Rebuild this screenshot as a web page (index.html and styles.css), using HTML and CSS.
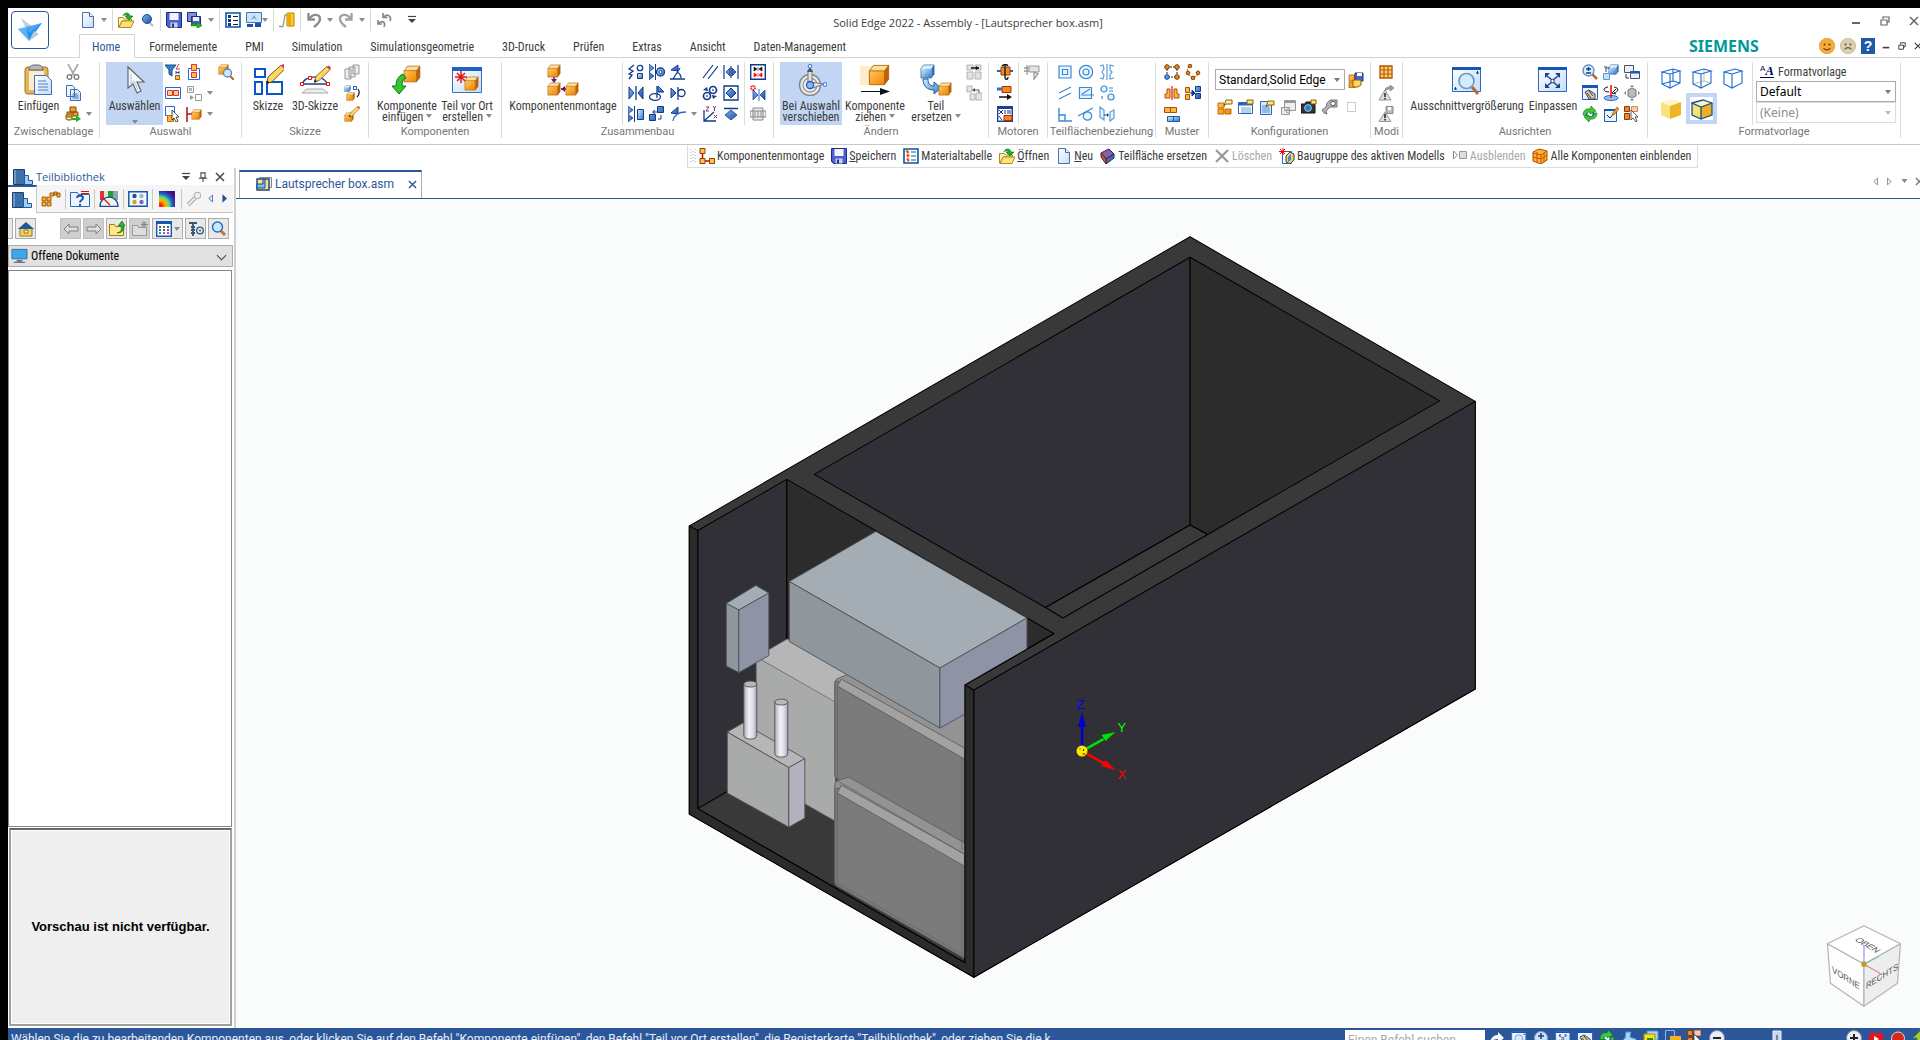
FILE: index.html
```html
<!DOCTYPE html>
<html lang="de">
<head>
<meta charset="utf-8">
<title>Solid Edge 2022 - Assembly</title>
<link rel="stylesheet" href="styles.css">
</head>
<body>
<svg class="defs" aria-hidden="true">
<defs>
<linearGradient id="or" x1="0" y1="0" x2="1" y2="1"><stop offset="0" stop-color="#ffc85a"/><stop offset="1" stop-color="#f08400"/></linearGradient>
<linearGradient id="bl" x1="0" y1="0" x2="1" y2="1"><stop offset="0" stop-color="#d8f0ff"/><stop offset="1" stop-color="#2a7ac8"/></linearGradient>
<linearGradient id="dk" x1="0" y1="0" x2="1" y2="1"><stop offset="0" stop-color="#7fb0e8"/><stop offset="1" stop-color="#1b4fa8"/></linearGradient>
<linearGradient id="pg" x1="0" y1="0" x2="1" y2="1"><stop offset="0" stop-color="#fff"/><stop offset="1" stop-color="#c4dcf8"/></linearGradient>
<linearGradient id="cyl"><stop offset="0" stop-color="#aeabb6"/><stop offset=".4" stop-color="#f2f0fa"/><stop offset=".7" stop-color="#dedce8"/><stop offset="1" stop-color="#a4a2ac"/></linearGradient>
<radialGradient id="heat" cx="0.1" cy="0.9" r="1.1"><stop offset="0" stop-color="#f00"/><stop offset=".3" stop-color="#fb0"/><stop offset=".5" stop-color="#4d8"/><stop offset=".65" stop-color="#26c"/><stop offset=".9" stop-color="#40108a"/></radialGradient>
</defs>
<symbol id="caret" viewBox="0 0 6 4"><path d="M0 0h6L3 4z" fill="#8a8a8a"/></symbol>
<symbol id="cb" viewBox="0 0 16 16"><path d="M1 5l3-4h11l-3 4z" fill="#ffdf95"/><path d="M15 1v10l-3 4V5z" fill="#c55f00"/><path d="M1 5h11v10H1z" fill="url(#or)"/><path d="M1 5l3-4h11v10l-3 4H1zM1 5h11l3-4M12 5v10" fill="none" stroke="#a05a10" stroke-width=".6"/></symbol>
<symbol id="cbb" viewBox="0 0 16 16"><path d="M1 5l3-4h11l-3 4z" fill="#d9f0ff"/><path d="M15 1v10l-3 4V5z" fill="#2a72b8"/><path d="M1 5h11v10H1z" fill="url(#bl)"/><path d="M1 5l3-4h11v10l-3 4H1z" fill="none" stroke="#2a5f98" stroke-width=".7"/></symbol>
<symbol id="new" viewBox="0 0 16 16"><path d="M2.500.500h7l4 4v11h-11z" fill="url(#pg)" stroke="#4a6ea8"/><path d="M9.500.500v4h4" fill="#fff" stroke="#4a6ea8"/></symbol>
<symbol id="open" viewBox="0 0 16 16"><path d="M.5 5.500h5l1 1.500h7v2H4L1 15H.500z" fill="#fff3b8" stroke="#b08a20"/><path d="M1 15.500L4 9h12l-3 6.500z" fill="#ffe07c" stroke="#b08a20"/><path d="M5 3.500C7 0 11 0 12 4h3l-4 4-4-4h2.500C9 2.500 7 2.500 5 3.500z" fill="#19b219" stroke="#08690c" stroke-width=".6"/></symbol>
<symbol id="ball" viewBox="0 0 16 16"><path d="M9 9l5 5" stroke="#bbb" stroke-width="2"/><circle cx="8" cy="7" r="4.500" fill="url(#dk)" stroke="#1e4f96"/></symbol>
<symbol id="save" viewBox="0 0 16 16"><path d="M.5.500h15v15h-13l-2-2z" fill="#4a5fd0" stroke="#1c2c80"/><path d="M3.500 1h9v7h-9z" fill="#f0f4fb"/><path d="M4.500 10.500h7v5h-7z" fill="#c9d2e6"/><path d="M6 11.500h2v4H6z" fill="#23328c"/></symbol>
<symbol id="saveas" viewBox="0 0 16 16"><path d="M.5.500h9v9h-9z" fill="#7f8ee0" stroke="#1c2c80"/><path d="M4.500 4.500h9v9h-9z" fill="#4a5fd0" stroke="#1c2c80"/><path d="M6 5h6v4H6z" fill="#eef"/><path d="M5 9v3h5v-2.500l5 4-5 3V14H4z" fill="#1cb81c" stroke="#07690a" stroke-width=".5"/></symbol>
<symbol id="list" viewBox="0 0 16 16"><path d="M1 1h14v14H1z" fill="#fff" stroke="#0a56a0" stroke-width="1.600"/><path d="M3 3h3v3H3zM3 7h3v3H3zM3 11h3v3H3z" fill="#0a3c80"/><path d="M8 4.500h5M8 8.500h5M8 12.500h5" stroke="#222"/></symbol>
<symbol id="mat" viewBox="0 0 16 16"><path d="M1 1h14v14H1z" fill="#fff" stroke="#0a56a0" stroke-width="1.600"/><path d="M2.500 3l2-1 2 2-2 2zM3 7l2-1 2 1-2 3zM3 11l2-1 2 2-2 2z" fill="#e8590c"/><path d="M8 4h5M8 8h5M8 12h5" stroke="#135b9a" stroke-width="1.200"/></symbol>
<symbol id="disp" viewBox="0 0 16 16"><path d="M.5.500h15v10H.5z" fill="#cfe2f7" stroke="#3f74b8"/><path d="M5 8l3-5 3 5-3-2z" fill="#6aa0dc"/><path d="M1 12h6v3H1zM9 11h6v4H9z" fill="#1d51a8"/></symbol>
<symbol id="door" viewBox="0 0 16 16"><path d="M8 1h7v13H8z" fill="#ffc928" stroke="#b98100"/><path d="M8 1l4 2v12.500l-4-2z" fill="#e8ac00"/><path d="M0 14.500h4L6 3h2" fill="none" stroke="#999" stroke-width="1.300"/></symbol>
<symbol id="undo" viewBox="0 0 16 16"><path d="M2.500 1v6.500h6.500M3 7C7 1 14 2 14 7c0 3-2 5-6 8" fill="none" stroke="#8c8c8c" stroke-width="2.400"/></symbol>
<symbol id="redo" viewBox="0 0 16 16"><path d="M13.500 1v6.500H7M13 7C9 1 2 2 2 7c0 3 2 5 6 8" fill="none" stroke="#a2a2a2" stroke-width="2.400"/></symbol>
<symbol id="hist" viewBox="0 0 16 16"><path d="M7 1v4.500h4.500M8 5c3-4 8-1 6 4M2 8v4h4M3 11c3-3 7-1 5 4" fill="none" stroke="#888" stroke-width="1.700"/></symbol>
<symbol id="cust" viewBox="0 0 10 10"><path d="M1 1.500h8" stroke="#444" stroke-width="1.200"/><path d="M1 4h8L5 8z" fill="#444"/></symbol>
<symbol id="logo" viewBox="0 0 36 36"><path d="M9 6l12 9-5 6z" fill="#c3cdd8"/><path d="M6 17l10-3 2 14z" fill="#7fc2f6"/><path d="M30 11L17 29l-3-12z" fill="#2b8ff0"/><path d="M30 11l-16 4 3 6z" fill="#4ba6f7"/><path d="M17 29l5-10 5 3z" fill="#b9c8da"/><path d="M6 17l8-1 3 13z" fill="#5db2f4"/></symbol>
<symbol id="paste" viewBox="0 0 32 32"><rect x="2" y="3" width="23" height="27" rx="3" fill="#e6b558" stroke="#a07020"/><path d="M6 7h15v19H6z" fill="#f9eed2"/><path d="M6 6c0-4 3-5 5-5h4c3 0 5 2 5 5z" fill="#b8b8b8" stroke="#666"/><path d="M11.500 11.500h12l5 5v14h-17z" fill="url(#pg)" stroke="#3f6fb8"/><path d="M15 17h8M15 20h10M15 23h10M15 26h10" stroke="#4d82c8"/></symbol>
<symbol id="cut" viewBox="0 0 16 16"><path d="M3 0l6 11M13 0L7 11" stroke="#aaa" stroke-width="1.700"/><circle cx="4.500" cy="13" r="2.300" fill="none" stroke="#777" stroke-width="1.300"/><circle cx="11.500" cy="13" r="2.300" fill="none" stroke="#777" stroke-width="1.300"/></symbol>
<symbol id="copy" viewBox="0 0 16 16"><path d="M1.500.500h6l2 2v9h-8zM5.500 4.500h7l3 3v8h-10z" fill="url(#pg)" stroke="#3b6fba"/><path d="M7.500 9h5M7.500 11h6M7.500 13h6" stroke="#3b6fba"/></symbol>
<symbol id="clone" viewBox="0 0 16 16"><path d="M5 1h6v5H5zM2 6h5v5H2zM8 6h5v4H8z" fill="#eaa030" stroke="#8a4a00"/><circle cx="4" cy="11" r="3" fill="none" stroke="#a08020" stroke-width="1.500"/><path d="M7 12h4V9l5 4-5 3v-2H7z" fill="#20b420"/></symbol>
<symbol id="cursor" viewBox="0 0 32 32"><path d="M9 3v21l5-4 4 9 4-2-4-9h7z" fill="#f4f8ff" stroke="#666" stroke-width="1.200"/><path d="M12 10v10l3-3 4 9" fill="none" stroke="#a8c6ea"/></symbol>
<symbol id="filter" viewBox="0 0 16 16"><path d="M0 1h11L7 6v6l-3-2V6z" fill="#3a80c8" stroke="#154a88"/><path d="M14 0l-3 5h4" fill="none" stroke="#e33"/><path d="M10.500 11.500h4v4h-4z" fill="#ffbf47" stroke="#a85b00"/><path d="M11 7v3M14 7v3M11 8.500h3" stroke="#24c"/></symbol>
<symbol id="boxsel" viewBox="0 0 16 16"><path d="M.5 2.500h15v11H.5z" fill="#fff" stroke="#2266dd"/><path d="M2.500 5.500h5v5h-5zM8.500 5.500h5v5h-5z" fill="#ffd08a" stroke="#d33"/></symbol>
<symbol id="cursel" viewBox="0 0 16 16"><path d="M.5.500h9v9h-9z" fill="#fff" stroke="#2266dd"/><path d="M2.500 9.500h6v6h-6z" fill="#ffb52e" stroke="#c26c00"/><path d="M7 4v10l2-2 2 4 2-1-2-4h3z" fill="#fff" stroke="#222" stroke-width=".8"/></symbol>
<symbol id="topsel" viewBox="0 0 16 16"><path d="M2.500 4.500h11v11h-11z" fill="#fff" stroke="#2266dd"/><path d="M5.500 .500h5v6h-5zM5.500 8.500h5v5h-5z" fill="#ffbe55" stroke="#d33"/></symbol>
<symbol id="graysel" viewBox="0 0 16 16"><path d="M1.500 1.500h6v6h-6zM9.500 9.500h6v6h-6z" fill="#fff" stroke="#999"/><path d="M3.500 3.500h2v2h-2z" stroke="#999" fill="none"/><path d="M4 10l4 2.500L4 15z" fill="#999"/></symbol>
<symbol id="plane" viewBox="0 0 16 16"><path d="M1 1v15M1 8h5" stroke="#b01010" stroke-width="1.500"/><use href="#cb" x="5" y="3" width="11" height="11"/></symbol>
<symbol id="find" viewBox="0 0 16 16"><use href="#cb" width="11" height="11"/><path d="M12 12l4 4" stroke="#b06a30" stroke-width="2"/><circle cx="9.500" cy="9" r="4" fill="#cfe8fc" stroke="#5a88b8" stroke-width="1.300"/></symbol>
<symbol id="pencil" viewBox="0 0 16 16"><path d="M0 16l2-6L12 1l3 3L5 14z" fill="#ffd566" stroke="#7a5512" stroke-width=".8"/><path d="M12 1l2-1 2 2-1 2z" fill="#e0306c"/><path d="M0 16l1-3 2 2z" fill="#222"/></symbol>
<symbol id="sketch" viewBox="0 0 32 32"><path d="M3 5h10v8H3zM3 18h7v12H3zM15 18h15v12H15z" fill="#fff" stroke="#0a56c8" stroke-width="2"/><use href="#pencil" x="14" y="0" width="20" height="20"/></symbol>
<symbol id="sk3d" viewBox="0 0 32 32"><path d="M8 25h16l5 4H3z" fill="#eee" stroke="#aaa"/><path d="M3 20h26M3 20c2-4 5-6 8-6 6-2 12-2 17 5" fill="none" stroke="#1e3c88" stroke-width="1.300"/><path d="M1.500 18.500h3v3h-3zM27.500 18.500h3v3h-3zM9.500 12.500h3v3h-3z" fill="#fff" stroke="#e01010"/><use href="#pencil" x="15" y="1" width="17" height="18"/></symbol>
<symbol id="gcopy" viewBox="0 0 16 16"><path d="M1 5h6v10H1zM5 3h6v10H5zM9 1h6v9H9z" fill="#eee" stroke="#999"/></symbol>
<symbol id="swap" viewBox="0 0 16 16"><use href="#cbb" width="7" height="7"/><use href="#cb" x="2" y="7" width="9" height="9"/><path d="M9.500 1.500h3v3h-3z" fill="#fff" stroke="#15c"/><path d="M14 4c2 3 1 6-1 8" fill="none" stroke="#111" stroke-width="1.200"/></symbol>
<symbol id="paint" viewBox="0 0 16 16"><use href="#cb" y="6" width="10" height="10"/><use href="#pencil" x="5" y="0" width="11" height="11"/></symbol>
<symbol id="insert" viewBox="0 0 32 32"><use href="#cb" x="12" y="1" width="18" height="18"/><path d="M12 10C7 12 5 17 5 22H1l7 8 7-8h-4c0-4 1-7 4-8z" fill="#35c435" stroke="#0d7a12"/></symbol>
<symbol id="inplace" viewBox="0 0 32 32"><path d="M1.500 3.500h29v25h-29z" fill="url(#pg)" stroke="#3b6fba"/><path d="M1 3h30v4H1z" fill="#1d62c4"/><use href="#cb" x="13" y="12" width="15" height="15"/><path d="M10 7v12M4 13h12M6 9l8 8M14 9l-8 8" stroke="#e01818" stroke-width="1.500"/></symbol>
<symbol id="assem" viewBox="0 0 32 32"><use href="#cb" x="0" y="0" width="14" height="14"/><use href="#cb" x="0" y="18" width="14" height="14"/><use href="#cb" x="18" y="18" width="14" height="14"/><path d="M7 13v4M14 25h5" stroke="#701070" stroke-width="1.500"/><path d="M4 15h6l-3 4zM18 22v6l-4-3z" fill="#701070"/></symbol>
<symbol id="assems" viewBox="0 0 16 16"><path d="M1 .500h5v5H1zM1 10.500h5v5H1zM10.500 10.500h5v5h-5z" fill="#ffc050" stroke="#8a4400"/><path d="M3.500 6v4M6 13h4" stroke="#c00" stroke-width="1.500"/></symbol>
<symbol id="r1" viewBox="0 0 16 16"><path d="M6 1L1 5l4 2-4 3 3 1-3 4" fill="none" stroke="#123a8c" stroke-width="1.300"/><circle cx="12" cy="4" r="2.700" fill="#fff" stroke="#123a8c" stroke-width="1.300"/><path d="M9.500 9.500h5v5h-5z" fill="url(#bl)" stroke="#123a8c"/></symbol>
<symbol id="r2" viewBox="0 0 16 16"><path d="M0 0l5 4-5 4 5 4-5 4z" fill="url(#dk)" stroke="#123a8c" stroke-width=".7"/><path d="M6.500 0v16" stroke="#123a8c"/><circle cx="11.500" cy="8" r="4" fill="url(#bl)" stroke="#123a8c" stroke-width="1.300"/><circle cx="11.500" cy="8" r="1.600" fill="#fff" stroke="#123a8c"/></symbol>
<symbol id="r3" viewBox="0 0 16 16"><path d="M1 6l7-5v6z" fill="url(#dk)" stroke="#123a8c"/><path d="M3 15L10 4M0 15h15M11 14c0-4-2-5-4-6" fill="none" stroke="#123a8c" stroke-width="1.300"/></symbol>
<symbol id="r4" viewBox="0 0 16 16"><path d="M1 2l5 6-5 6zM15 2l-5 6 5 6z" fill="url(#dk)" stroke="#123a8c"/><path d="M8 1v14" stroke="#123a8c" stroke-width="1.300"/></symbol>
<symbol id="r5" viewBox="0 0 16 16"><path d="M8 1v12" stroke="#123a8c" stroke-width="1.300"/><path d="M9 1l6 6H9z" fill="url(#dk)" stroke="#123a8c"/><ellipse cx="6" cy="12" rx="5.500" ry="3.300" fill="none" stroke="#123a8c" stroke-width="1.300"/></symbol>
<symbol id="r6" viewBox="0 0 16 16"><path d="M1 3l5 5-5 5z" fill="url(#dk)" stroke="#123a8c"/><path d="M8 2v13" stroke="#123a8c" stroke-width="1.300"/><circle cx="11.500" cy="8" r="3.500" fill="#fff" stroke="#123a8c" stroke-width="1.300"/></symbol>
<symbol id="r7" viewBox="0 0 16 16"><path d="M0 0l5 4-5 4 5 4-5 4z" fill="url(#dk)" stroke="#123a8c" stroke-width=".7"/><path d="M6.500 0v16" stroke="#123a8c"/><path d="M9.500 3.500h6v10h-6z" fill="url(#bl)" stroke="#123a8c"/></symbol>
<symbol id="r8" viewBox="0 0 16 16"><path d="M8.500.500h6v6h-6zM.500 8.500h6v6h-6z" fill="url(#dk)" stroke="#123a8c"/><path d="M4 6h4M6 4L3.500 6 6 8M9 13h3V9" fill="none" stroke="#123a8c"/></symbol>
<symbol id="r9" viewBox="0 0 16 16"><path d="M1 7l7-6v7z" fill="url(#dk)" stroke="#123a8c"/><path d="M3 15c1-6 6-9 13-9" fill="none" stroke="#2c6cc8" stroke-width="1.300"/></symbol>
<symbol id="r10" viewBox="0 0 16 16"><path d="M1 14L11 1M6 15L16 2" stroke="#123a8c" stroke-width="1.200"/></symbol>
<symbol id="r11" viewBox="0 0 16 16"><path d="M1 1v14M15 1v14M8 2v12" stroke="#123a8c" stroke-width="1.200"/><path d="M7 4v8L3 8zM9 4v8l4-4z" fill="url(#dk)" stroke="#123a8c" stroke-width=".8"/></symbol>
<symbol id="r12" viewBox="0 0 16 16"><circle cx="11" cy="5" r="3.500" fill="none" stroke="#123a8c" stroke-width="1.700"/><circle cx="5" cy="11" r="3.500" fill="none" stroke="#123a8c" stroke-width="1.700"/><circle cx="11" cy="5" r="1" fill="#2c6cc8"/><circle cx="5" cy="11" r="1" fill="#2c6cc8"/><path d="M1 5l4-3 1 4zM15 11l-4 3-1-4z" fill="#123a8c"/></symbol>
<symbol id="r13" viewBox="0 0 16 16"><path d="M1 1h14v14H1z" fill="#fff" stroke="#123a8c" stroke-width="1.300"/><path d="M8 3l5 5-5 5-5-5z" fill="url(#dk)" stroke="#123a8c"/></symbol>
<symbol id="r14" viewBox="0 0 16 16"><path d="M2 4v11h12M2 15L12 6" fill="none" stroke="#123a8c" stroke-width="1.300"/><path d="M4 1h3L4 5h3M11 0l1.500 2L14 0M12.500 2v3M12 9l3 3M15 9l-3 3" fill="none" stroke="#803090"/></symbol>
<symbol id="r15" viewBox="0 0 16 16"><path d="M1 2.500h14" stroke="#123a8c" stroke-width="1.500"/><path d="M8 4l6 5-6 5-6-5z" fill="url(#dk)" stroke="#123a8c" stroke-width=".8"/></symbol>
<symbol id="c1" viewBox="0 0 16 16"><path d="M.7.700h14.600v14.600H.7z" fill="#fff" stroke="#123a8c" stroke-width="1.400"/><path d="M4 3l3 2-3 2zM12 3L9 5l3 2zM8 3v4" fill="#111" stroke="#111" stroke-width=".6"/><path d="M4 9l3 2-3 2zM12 9l-3 2 3 2zM8 9v4" fill="red" stroke="red" stroke-width=".6"/></symbol>
<symbol id="c2" viewBox="0 0 16 16"><path d="M3 5l5 5-5 5zM15 5l-5 5 5 5z" fill="url(#dk)" stroke="#123a8c" stroke-width=".7"/><path d="M9 4v12" stroke="#2c6cc8"/><circle cx="3" cy="3" r="2" fill="#fff" stroke="red" stroke-width="1.800" stroke-dasharray="1 .6"/></symbol>
<symbol id="c3" viewBox="0 0 16 16"><path d="M3 2h10v12H3zM0 5h16v6H0z" fill="#ececec" stroke="#888"/><path d="M5 5v6M8 5v6M11 5v6" stroke="#888"/></symbol>
<symbol id="move" viewBox="0 0 32 32"><circle cx="15" cy="21" r="10.500" fill="#e9edf2" stroke="#888" stroke-width="1.500"/><circle cx="15" cy="21" r="7" fill="none" stroke="#999" stroke-width="1.300"/><path d="M13 21V6h4v15M15 18l14 2-14 5z" fill="#dfe3e8" stroke="#777"/><path d="M15 3l3 5h-6z" fill="#555"/><circle cx="15" cy="21" r="3.500" fill="#8fb8e8" stroke="#1e5ec8" stroke-width="1.300"/><circle cx="15" cy="2.300" r="1.800" fill="#fff" stroke="#1e70e0"/><circle cx="30" cy="20.500" r="1.800" fill="#fff" stroke="#1e70e0"/></symbol>
<symbol id="drag" viewBox="0 0 32 32"><path d="M1 2h12v19H1z" fill="#ffe0a8" opacity=".6"/><use href="#cb" x="9" y="0" width="22" height="22"/><path d="M2 27h19v-3l10 3.500L21 31v-3H2z" fill="#111"/></symbol>
<symbol id="repl" viewBox="0 0 32 32"><use href="#cbb" width="15" height="15"/><path d="M3 15c0 7 4 11 11 11v4l7-6-7-6v4c-5 0-6-3-6-7z" fill="url(#bl)" stroke="#1e5a9c"/><use href="#cb" x="18" y="18" width="14" height="14"/></symbol>
<symbol id="g1" viewBox="0 0 16 16"><path d="M1 1h6v5H1zM9 1h6v5H9zM1 8h6v7H1zM9 8h6v7H9z" fill="#e2e2e2" stroke="#b4b4b4"/><path d="M5 4h8" stroke="#111" stroke-width="1.500"/><path d="M10 2l3 2-3 2z" fill="#111"/></symbol>
<symbol id="g2" viewBox="0 0 16 16"><path d="M1 1h5v6H1zM4 9h5v6H4zM10 8h6v7h-6z" fill="#e4e4e4" stroke="#b4b4b4"/><path d="M13 8V5H7" fill="none" stroke="#555"/><path d="M9 3L6 5l3 2z" fill="#555"/></symbol>
<symbol id="m1" viewBox="0 0 16 16"><path d="M4 3h9v8H4z" fill="#ef8a1c" stroke="#a03a10"/><path d="M0 7h4M13 7h3" stroke="#2462b8" stroke-width="2"/><path d="M5 2c2-2 5-2 6 0M8 1v12c0 3 3 3 3 0" fill="none" stroke="#111" stroke-width="1.300"/></symbol>
<symbol id="m2" viewBox="0 0 16 16"><path d="M5 1.500h9v6H5z" fill="#f08a18" stroke="#b02a10"/><path d="M0 4h5" stroke="#2c74c8" stroke-width="3"/><path d="M2 12h10" stroke="#111" stroke-width="1.500"/><path d="M10 9l5 3-5 3z" fill="#111"/></symbol>
<symbol id="m3" viewBox="0 0 16 16"><path d="M.7.700h14.600v14.600H.7z" fill="#fff" stroke="#1c3f94" stroke-width="1.400"/><path d="M1 1h14v2H1z" fill="#1c3f94"/><path d="M2 4l4 4M6 4L2 8M8 4v4M10 5h4M10 7h4M2 10l3 4" stroke="#12348c"/><path d="M7 9.500h8v5H7z" fill="#f08a18" stroke="#b02a10"/></symbol>
<symbol id="m4" viewBox="0 0 16 16"><path d="M5 2h10v6H5z" fill="#e4e4e4" stroke="#999"/><path d="M0 4h5M0 7h5M3 1v10M10 8v7l4-5z" fill="#eee" stroke="#999" stroke-width="1.300"/></symbol>
<symbol id="f1" viewBox="0 0 16 16"><path d="M2 2h12v12H2zM5.500 5.500h5v5h-5z" fill="#eaf4fd" stroke="#3b8ad4" stroke-width="1.200"/></symbol>
<symbol id="f2" viewBox="0 0 16 16"><circle cx="8" cy="8" r="6.700" fill="#eaf4fd" stroke="#3b8ad4" stroke-width="1.200"/><circle cx="8" cy="8" r="3" fill="none" stroke="#3b8ad4" stroke-width="1.200"/></symbol>
<symbol id="f3" viewBox="0 0 16 16"><path d="M1 2l3-1 1 4-2 3 2 3-1 4-3-1M15 2l-4-1v5l2 2-2 3v4l4-1M8 0v16" fill="none" stroke="#5a9cd8" stroke-width="1.200"/></symbol>
<symbol id="f4" viewBox="0 0 16 16"><path d="M2 8l12-6M2 14l12-6" stroke="#3b8ad4" stroke-width="1.200"/></symbol>
<symbol id="f5" viewBox="0 0 16 16"><path d="M1.500 2.500h12v11h-12z" fill="#eaf4fd" stroke="#3b8ad4" stroke-width="1.200"/><path d="M3 10h13M4 9l8-5" stroke="#3b8ad4" stroke-width="1.200"/></symbol>
<symbol id="f6" viewBox="0 0 16 16"><circle cx="5" cy="4" r="3" fill="#eaf4fd" stroke="#3b8ad4" stroke-width="1.200"/><circle cx="12" cy="12" r="3" fill="#eaf4fd" stroke="#3b8ad4" stroke-width="1.200"/><path d="M10 3h4M10 6h4M3 11v3" stroke="#3b8ad4" stroke-width="1.200"/></symbol>
<symbol id="f7" viewBox="0 0 16 16"><path d="M2 2v13h13M2 9h6v6" fill="none" stroke="#3b8ad4" stroke-width="1.400"/></symbol>
<symbol id="f8" viewBox="0 0 16 16"><circle cx="9.500" cy="10" r="4.200" fill="#eaf4fd" stroke="#3b8ad4" stroke-width="1.200"/><path d="M0 10l15-8" stroke="#3b8ad4" stroke-width="1.200"/></symbol>
<symbol id="f9" viewBox="0 0 16 16"><path d="M1 1l4 3v10l-4-3zM15 4l-4 2v9l4-3z" fill="#eaf4fd" stroke="#5a9cd8" stroke-width="1.200"/><path d="M5 9h4" stroke="#123a8c"/><path d="M8 7l2 2-2 2z" fill="#123a8c"/></symbol>
<symbol id="p1" viewBox="0 0 16 16"><path d="M3 3h10v10H3z" fill="none" stroke="#222" stroke-dasharray="2 1"/><circle cx="3" cy="3" r="2.300" fill="#e88a20" stroke="#7a3400"/><circle cx="13" cy="3" r="2.300" fill="#e88a20" stroke="#7a3400"/><circle cx="3" cy="13" r="2.300" fill="#5a9cf0" stroke="#1538a0"/><circle cx="13" cy="13" r="2.300" fill="#e88a20" stroke="#7a3400"/></symbol>
<symbol id="p2" viewBox="0 0 16 16"><path d="M4 2C0 8 4 14 9 13s5-5 4-7" fill="none" stroke="#b84c08" stroke-dasharray="2 1"/><circle cx="5" cy="2" r="1.800" fill="#e88a20" stroke="#8a3a00"/><circle cx="3" cy="9" r="1.800" fill="#e88a20" stroke="#8a3a00"/><circle cx="8" cy="14" r="1.800" fill="#e88a20" stroke="#8a3a00"/><circle cx="13" cy="9" r="1.800" fill="#e88a20" stroke="#8a3a00"/></symbol>
<symbol id="p3" viewBox="0 0 16 16"><path d="M1 13V9h2V4h3v9zM15 13V9h-2V4h-3v9z" fill="#ffb545" stroke="#a85200"/><path d="M8 1v14" stroke="red" stroke-width="1.200"/></symbol>
<symbol id="p4" viewBox="0 0 16 16"><path d="M.5 2.500h4v5h-4zM.500 9.500h4v5h-4z" fill="#ffb545" stroke="#a85200"/><path d="M10.500 1.500h5v5h-5zM10.500 8.500h5v5h-5z" fill="url(#dk)" stroke="#123a8c"/><path d="M5 8h3M7 5l3 3-3 3z" fill="#123a8c" stroke="#123a8c"/></symbol>
<symbol id="p5" viewBox="0 0 16 16"><path d="M.5 1.500h6v5h-6zM6.500 1.500h6v5h-6z" fill="#ffb545" stroke="#a85200"/><path d="M3.500 10.500h6v5h-6zM9.500 10.500h6v5h-6z" fill="url(#bl)" stroke="#1e5aa8"/></symbol>
<symbol id="k0" viewBox="0 0 16 16"><path d="M1 3h6v6H1zM1 10h6v6H1z" fill="url(#or)" stroke="#a85200" stroke-width=".7"/><path d="M7 1h8v8H7z" fill="#4a5fd0" stroke="#1c2c80"/><path d="M9 1h5v3H9z" fill="#fff"/><path d="M5 8h8v5l-3 2H5z" fill="#ffd75e" stroke="#8a6400"/></symbol>
<symbol id="k1" viewBox="0 0 16 16"><path d="M1 4h6v5H1zM1 10h6v5H1zM8 10h6v5H8z" fill="url(#or)" stroke="#c26c00"/><path d="M9 1h6v4H9L7 7z" fill="#fff1a8" stroke="#8a6400"/></symbol>
<symbol id="k2" viewBox="0 0 16 16"><path d="M.5 3.500h14v11H.5z" fill="#fff" stroke="#2a66c0"/><path d="M1 4h13v2.500H1z" fill="#2a66c0"/><path d="M3 9h10M3 11h10M3 13h10" stroke="#6f9fd8"/><path d="M9 1h6v4H9z" fill="#ffe480" stroke="#8a6400"/></symbol>
<symbol id="k3" viewBox="0 0 16 16"><path d="M1.500 2.500h11v13h-11z" fill="#d8e9fa" stroke="#2a66c0"/><path d="M3 7h7M3 9h8M3 11h8M3 13h8" stroke="#4a8ad0"/><path d="M9 2h6v4H9L7 8z" fill="#ffe480" stroke="#8a6400"/></symbol>
<symbol id="k4" viewBox="0 0 16 16"><path d="M4.500 1.500h11v10h-11zM1.500 8.500h8v7h-8z" fill="#eee" stroke="#999"/><path d="M5 3h10" stroke="#999" stroke-width="2"/><circle cx="8" cy="12" r="2" fill="none" stroke="#999"/></symbol>
<symbol id="k5" viewBox="0 0 16 16"><path d="M0 5h4l1-2h5l1 2h3v9H0z" fill="#333" stroke="#111"/><circle cx="7" cy="9" r="3.400" fill="#2c7cc8" stroke="#9cd"/><path d="M10 1h5v4h-5z" fill="#ffe480" stroke="#8a6400"/></symbol>
<symbol id="k6" viewBox="0 0 16 16"><path d="M5 4l3-3h7v7H8l-4 4 1 3-3-1-2-3 4-3z" fill="#b4b4b4" stroke="#777"/><circle cx="11" cy="4.500" r="2.300" fill="#fff" stroke="#555"/></symbol>
<symbol id="k7" viewBox="0 0 16 16"><path d="M4.500 3.500h8v9h-8z" fill="#fff" stroke="#999" stroke-dasharray="1 1"/></symbol>
<symbol id="d1" viewBox="0 0 16 16"><path d="M2 2h12v12H2z" fill="#ffcf78" stroke="#b35a00" stroke-width="1.400"/><path d="M6 2v12M10 2v12M2 6h12M2 10h12" stroke="#b35a00" stroke-width="1.200"/></symbol>
<symbol id="d2" viewBox="0 0 16 16"><path d="M7 5l6 10H1z" fill="#ddd" stroke="#999"/><path d="M7 8v4M7 13v1.500" stroke="#222" stroke-width="1.500"/><path d="M7 6c0-4 3-4 5-4V0l4 3-4 3V4" fill="#999" stroke="#888" stroke-width=".8"/></symbol>
<symbol id="d3" viewBox="0 0 16 16"><path d="M8 .500h7v7H8z" fill="#bbb" stroke="#888"/><path d="M10 1h3v3h-3z" fill="#fff"/><path d="M7 6l6 9.500H1z" fill="#ddd" stroke="#999"/><path d="M7 8v4M7 13v1.500" stroke="#222" stroke-width="1.500"/></symbol>
<symbol id="zooma" viewBox="0 0 32 32"><path d="M1.500 3.500h28v24h-28z" fill="url(#pg)" stroke="#2a66c0"/><path d="M1 3h29v3H1z" fill="#1457b8"/><path d="M3 25h3M4.500 23v3M25 9h3M26.500 7v3" stroke="#123a8c"/><path d="M21 23l6 7" stroke="#b86a28" stroke-width="3"/><circle cx="15.500" cy="17" r="7.500" fill="#d2ecfb" stroke="#6a9ac8" stroke-width="1.700"/></symbol>
<symbol id="fit" viewBox="0 0 32 32"><path d="M1.500 3.500h28v24h-28z" fill="url(#pg)" stroke="#2a66c0"/><path d="M1 3h29v3H1z" fill="#1457b8"/><path d="M10 12l5 4M21 12l-5 4M10 22l5-4M21 22l-5-4" stroke="#1c3f94" stroke-width="1.500"/><path d="M8 9h5l-5 5zM23 9v5l-5-5zM8 24v-5l5 5zM23 24h-5l5-5z" fill="#1c3f94"/><circle cx="15.500" cy="17" r="1.700" fill="#fff" stroke="#1c3f94"/></symbol>
<symbol id="a1" viewBox="0 0 16 16"><path d="M10 10l5 5" stroke="#b86a28" stroke-width="2.500"/><circle cx="6.500" cy="6.500" r="5.500" fill="#d8eefc" stroke="#5a88c0" stroke-width="1.300"/><path d="M4 5h5M6.500 3v4M4 9h5" stroke="#123a8c" stroke-width="1.300"/></symbol>
<symbol id="a2" viewBox="0 0 16 16"><use href="#cbb" x="5" y="0" width="11" height="11"/><path d="M.5 9.500h6v6h-6z" fill="#bfe2fb" stroke="#5a9cd8"/><path d="M3 8V4h4M1 3h3" stroke="#345" fill="none"/></symbol>
<symbol id="a3" viewBox="0 0 16 16"><path d="M.5 1.500h9v7h-9zM6.500 7.500h9v7h-9z" fill="#eef" stroke="#456"/><path d="M6.500 7.500h9v2h-9z" fill="#1457b8"/><path d="M2 10v4h3" stroke="#333" fill="none"/></symbol>
<symbol id="a4" viewBox="0 0 16 16"><path d="M.5.500h15v14H.5z" fill="#eaf2fc" stroke="#2a66c0"/><path d="M0 0h16v3H0z" fill="#1457b8"/><path d="M3 7l4-2 6 4v5H7z" fill="#d8c8b0" stroke="#444"/><path d="M7 6l4 5M5 8l4 5" stroke="#444"/></symbol>
<symbol id="a5" viewBox="0 0 16 16"><ellipse cx="8" cy="13" rx="7" ry="2.500" fill="#8cc4f0" stroke="#2a66c0"/><path d="M8 0v13" stroke="red" stroke-width="1.500"/><path d="M5 2C-1 3 0 7 6 7M11 2c6 1 4 5 0 6M13 4l-4 4 4 1" fill="none" stroke="#111"/></symbol>
<symbol id="a6" viewBox="0 0 16 16"><path d="M4 5l4-2 4 2v6l-4 2-4-2z" fill="#bbb" stroke="#777"/><path d="M8 0l2 2H6zM8 16l2-2H6zM0 8l2-2v4zM16 8l-2-2v4z" fill="#5a88b0"/></symbol>
<symbol id="a7" viewBox="0 0 16 16"><circle cx="8" cy="8" r="3.500" fill="#fff" stroke="#1d62c4" stroke-width="2"/><path d="M1 9C1 5 4 2 8 3l1-3 5 5-6 3V6C6 6 4 7 4 10zM15 7c0 4-3 7-7 6l-1 3-5-5 5-2v2c3 0 5-1 5-4z" fill="#3cc83c" stroke="#0a7a10" stroke-width=".6"/></symbol>
<symbol id="a8" viewBox="0 0 16 16"><path d="M1.500 3.500h12v12h-12z" fill="#eaf4fd" stroke="#1d62c4"/><path d="M1 3h13v2H1z" fill="#1457b8"/><path d="M4 9l3 3 6-7" fill="none" stroke="#222"/><path d="M9 8l5-7 2 2-5 6z" fill="#e8a030" stroke="#8a4a00" stroke-width=".6"/></symbol>
<symbol id="a9" viewBox="0 0 16 16"><path d="M.5.500h5v5h-5zM.500 7.500h5v6h-5z" fill="#e88a2c" stroke="#8a3a00"/><path d="M7.500.500h6v5h-6z" fill="#f8cbb0" stroke="#d9886c"/><path d="M7 4v10l2-2 3 4 1-1-2-4h3z" fill="#fff" stroke="#333" stroke-width=".8"/></symbol>
<symbol id="v1" viewBox="0 0 22 22"><path d="M2 5l11-3 7 2-10 3zM2 5v12l8 4V7M20 4v12l-10 5M13 2v12l7 2M13 14L2 17" fill="none" stroke="#1d6ad0" stroke-width="1.100"/></symbol>
<symbol id="v2" viewBox="0 0 22 22"><path d="M13 2v12l7 2M13 14L2 17" fill="none" stroke="#bbb"/><path d="M2 5l11-3 7 2-10 3zM2 5v12l8 4V7M20 4v12l-10 5" fill="none" stroke="#1d6ad0" stroke-width="1.100"/></symbol>
<symbol id="v3" viewBox="0 0 22 22"><path d="M2 5l11-3 7 2-10 3zM2 5v12l8 4V7M20 4v12l-10 5" fill="none" stroke="#1d6ad0" stroke-width="1.100"/></symbol>
<symbol id="v4" viewBox="0 0 22 22"><path d="M1 4l11-3 9 3-11 4z" fill="#fff7c8"/><path d="M1 4l9 4v13l-9-4z" fill="#fbe27c"/><path d="M21 4v13l-11 4V8z" fill="#eeb526"/></symbol>
<symbol id="v5" viewBox="0 0 22 22"><path d="M1 5l11-3 9 3-11 4z" fill="#fff5bb"/><path d="M1 5l9 4v12l-9-4z" fill="#fbdf70"/><path d="M21 5v12l-11 4V9z" fill="#eeb020"/><path d="M1 5l11-3 9 3-11 4zM1 5v12l9 4V9M21 5v12l-11 4" fill="none" stroke="#184e94" stroke-width="1.300"/></symbol>
<symbol id="del" viewBox="0 0 16 16"><path d="M2 2l12 12M14 2L2 14" stroke="#999" stroke-width="2.200"/></symbol>
<symbol id="face" viewBox="0 0 16 16"><path d="M1 5l8-4 5 5-8 5z" fill="#8a5fa8" stroke="#3a1a50"/><path d="M6 11l8-5v4l-8 6z" fill="#4a6ab0" stroke="#222a60"/><path d="M1 5l5 6v5L1 9z" fill="#c54" stroke="#522"/></symbol>
<symbol id="bau" viewBox="0 0 16 16"><path d="M3.500 3.500h9v12h-9z" fill="#fff" stroke="#2a66c0"/><path d="M4 0v7M0 3.500h7M1 1l5 5M6 1L1 6" stroke="red"/><path d="M7 8l4-4 4 2v6l-4 4-4-2z" fill="#ffd23a" stroke="#1a3c90"/><path d="M9 9l3-3v6l-3 2z" fill="#3a8ae0"/></symbol>
<symbol id="hide" viewBox="0 0 16 16"><path d="M1.500 3v8l4-4z" fill="none" stroke="#888"/><path d="M7.500 3.500h7v7h-7z" fill="#ddd" stroke="#999"/></symbol>
<symbol id="all" viewBox="0 0 16 16"><path d="M1 4l6-3 8 2v9l-6 4-8-3z" fill="#ffb52e" stroke="#a84400"/><path d="M9 7v8M1 5l8 2 6-4M5 4v10M1 9l8 2 6-4M12 5v9" fill="none" stroke="#c84c00"/></symbol>
<symbol id="lib" viewBox="0 0 20 16"><path d="M.5.500h11v15H.5z" fill="#3e70a8" stroke="#173e70"/><path d="M2 1v14" stroke="#9cc2e8"/><path d="M11.500 6.500h4v5h4v4h-8z" fill="#9fd0f4" stroke="#1d5a9c"/></symbol>
<symbol id="blocks" viewBox="0 0 20 16"><path d="M1 6h4v4H1zM6 6h4v4H6zM1 11h4v4H1zM6 11h4v4H6zM9 2h4v3H9zM13 1h3v3h-3zM16 2h3v4h-3z" fill="#ffad2a" stroke="#8a4a00" stroke-width=".8"/></symbol>
<symbol id="help" viewBox="0 0 20 16"><path d="M.5 1.500h7l1 2h11v12H.5z" fill="#eef5fd" stroke="#2a66c0"/><path d="M11 .500h8M11 2.500h8" stroke="#d11"/><path d="M7 7c0-3 6-3 6 0 0 2-3 2-3 4.500M10 13v2" fill="none" stroke="#1a5aa8" stroke-width="2"/></symbol>
<symbol id="gauge" viewBox="0 0 20 16"><path d="M1 0h4v9H1z" fill="#d33"/><path d="M5 0h4v7H5z" fill="#d8e8d8"/><path d="M9 0h5v7H9z" fill="#2a9a30"/><path d="M14 0h5v9h-5z" fill="#8aa"/><path d="M1 15.500C1 3 19 3 19 15.500z" fill="#f0f4f8" stroke="#1a4a88" stroke-width="1.300"/><path d="M11 14L4 7" stroke="#d11" stroke-width="1.300"/></symbol>
<symbol id="sens" viewBox="0 0 20 16"><path d="M.8.800h18.400v14.400H.8z" fill="#f4f8fd" stroke="#1457a8" stroke-width="1.500"/><circle cx="6.500" cy="5" r="2.200" fill="#1f4f98"/><circle cx="13.500" cy="5" r="2.200" fill="#9fb4d0"/><circle cx="6.500" cy="11" r="2.200" fill="#d8a020"/><circle cx="13.500" cy="11" r="2.200" fill="#7a66c8"/></symbol>
<symbol id="heatm" viewBox="0 0 16 16"><path d="M0 0h16v16H0z" fill="url(#heat)"/></symbol>
<symbol id="wrench" viewBox="0 0 16 16"><path d="M2 14l7-7" stroke="#aaa" stroke-width="4"/><path d="M2 14l7-7" stroke="#eee" stroke-width="2"/><circle cx="11.500" cy="4.500" r="3.300" fill="#eee" stroke="#aaa"/></symbol>
<symbol id="home" viewBox="0 0 16 16"><path d="M2 8v7h12V8" fill="#f5d264" stroke="#9a7414"/><path d="M0 8l8-7 8 7z" fill="#1f5a98"/><path d="M6 9h4v3H6z" fill="#fff2b0" stroke="#9a7414"/></symbol>
<symbol id="back" viewBox="0 0 16 16"><path d="M1 8l5-5v3h9v4H6v3z" fill="#ddd" stroke="#808080"/></symbol>
<symbol id="fwd" viewBox="0 0 16 16"><path d="M15 8l-5-5v3H1v4h9v3z" fill="#ddd" stroke="#808080"/></symbol>
<symbol id="up" viewBox="0 0 16 16"><path d="M.5 3.500h5l1 2h8v9H.5z" fill="#ffe78a" stroke="#a08010"/><path d="M8 12c4-1 5-3 4-7H9l4-5 3 5h-1.500C16 9 13 12 8 12z" fill="#30b030" stroke="#0a700e" stroke-width=".7"/></symbol>
<symbol id="newf" viewBox="0 0 16 16"><path d="M.5 4.500h5l1 2h8v8H.5z" fill="#ddd" stroke="#999"/><path d="M12 0v7M9 3.500h7M9.500 1l5 5M14.500 1l-5 5" stroke="#777" stroke-width=".8"/></symbol>
<symbol id="view" viewBox="0 0 16 16"><path d="M.7.700h14.600v14.600H.7z" fill="#fff" stroke="#1457b8" stroke-width="1.400"/><path d="M0 0h16v3H0z" fill="#1457b8"/><path d="M3 5h2v2H3zM11 8h2v2h-2z" fill="#d33"/><path d="M7 5h2v2H7zM3 11h2v2H3z" fill="#2a2"/><path d="M11 5h2v2h-2zM7 8h2v2H7zM3 8h2v2H3z" fill="#26c"/><path d="M7 11h2v2H7zM11 11h2v2h-2z" fill="#b4c"/></symbol>
<symbol id="screw" viewBox="0 0 16 16"><path d="M1 2h8M5 2v13M3 6h4M3 9h4M3 12h4" stroke="#345878" stroke-width="1.800"/><circle cx="12" cy="9.500" r="3.300" fill="#dde8f2" stroke="#345878" stroke-width="1.300"/><circle cx="12" cy="9.500" r="1" fill="#345878"/></symbol>
<symbol id="mag" viewBox="0 0 16 16"><path d="M9 9l5 5" stroke="#c07a30" stroke-width="3"/><circle cx="6.500" cy="6" r="5" fill="#c8e8fb" stroke="#2a72c0" stroke-width="1.500"/></symbol>
<symbol id="mon" viewBox="0 0 18 16"><path d="M1 1h16v10H1z" fill="#38a8f0" stroke="#4a6a88"/><path d="M6 12h6v2H6zM3 14h12v1.500H3z" fill="#6a7a8a"/></symbol>
<symbol id="asm" viewBox="0 0 16 16"><path d="M3.500 1.500h12v10h-12z" fill="#eee" stroke="#888"/><path d="M1 3h12v11H1z" fill="#ffe08a" stroke="#174a88" stroke-width="1.500"/><path d="M1 8h6V3h2v9H1z" fill="#7cc0f0" stroke="#174a88"/></symbol>
<symbol id="pin" viewBox="0 0 10 12"><path d="M2.500 1h5v6h-5zM0 7.500h10M5 8v4" fill="none" stroke="#444" stroke-width="1.300"/></symbol>
<symbol id="x" viewBox="0 0 10 10"><path d="M1 1l8 8M9 1L1 9" stroke="currentColor" stroke-width="1.500"/></symbol>
<symbol id="min" viewBox="0 0 10 10"><path d="M1 7h8" stroke="currentColor" stroke-width="2"/></symbol>
<symbol id="rest" viewBox="0 0 10 10"><path d="M3 3V1h6v5H7M1 4h6v5H1z" fill="none" stroke="currentColor" stroke-width="1.200"/></symbol>
<symbol id="tl" viewBox="0 0 6 10"><path d="M5.500 1v8L1 5z" fill="none" stroke="currentColor"/></symbol>
<symbol id="tr" viewBox="0 0 6 10"><path d="M.5 1v8L5 5z" fill="none" stroke="currentColor"/></symbol>
<symbol id="trf" viewBox="0 0 6 10"><path d="M.5 0v10L6 5z" fill="#1e4f96"/></symbol>
<symbol id="smile" viewBox="0 0 16 16"><circle cx="8" cy="8" r="7.700" fill="#f4ac3c" stroke="#d88a18" stroke-width=".6"/><circle cx="5.500" cy="6.500" r="1" fill="#5a3408"/><circle cx="10.500" cy="6.500" r="1" fill="#5a3408"/><path d="M4.500 10c2 2.500 5 2.500 7 0" fill="none" stroke="#5a3408" stroke-width="1.100"/></symbol>
<symbol id="sad" viewBox="0 0 16 16"><circle cx="8" cy="8" r="7.700" fill="#dccfae" stroke="#b9a984" stroke-width=".6"/><circle cx="5.500" cy="6.500" r="1" fill="#555"/><circle cx="10.500" cy="6.500" r="1" fill="#555"/><path d="M4.500 11.500c2-2.500 5-2.500 7 0" fill="none" stroke="#555" stroke-width="1.100"/></symbol>
<symbol id="gripv" viewBox="0 0 6 16"><path d="M1 1v15M5 1v15M3 3v12" stroke="#aaa" stroke-dasharray="1 2" fill="none"/></symbol>
<symbol id="s1" viewBox="0 0 16 16"><path d="M1 13c0-5 4-8 8-8V2l6 6-6 5v-4c-3 0-6 1-8 4z" fill="#fff"/></symbol>
<symbol id="s2" viewBox="0 0 16 16"><circle cx="8" cy="8" r="6.500" fill="#cfe0f4" stroke="#7fa4d0"/><path d="M5 6h6M8 3v6M5 11h6" stroke="#1c3f94" stroke-width="1.500"/></symbol>
<symbol id="s3" viewBox="0 0 16 16"><path d="M5 2h5l-1 5 6 2v6H1v-4l3-3z" fill="#a8d4f8" stroke="#4a90d0"/></symbol>
<symbol id="s4" viewBox="0 0 16 16"><path d="M4 1h11v9H4z" fill="#a8d4f8" stroke="#4a90d0"/><path d="M1 4h11v10H1z" fill="#f5e020" stroke="#a89000"/><path d="M4 8h6v6H4z" fill="#2a8a20"/></symbol>
<symbol id="s5" viewBox="0 0 16 16"><path d="M.5.500h9v13h-9z" fill="#2b579a" stroke="#8ab4e8"/><path d="M5 6h11v9H5z" fill="#f5b21e"/></symbol>
<symbol id="s6" viewBox="0 0 16 16"><circle cx="8" cy="8" r="7.500" fill="#e8eef6" stroke="#889"/><path d="M4 8h8" stroke="#222" stroke-width="2"/></symbol>
<symbol id="s7" viewBox="0 0 16 16"><circle cx="8" cy="8" r="7.500" fill="#e8eef6" stroke="#889"/><path d="M4 8h8M8 4v8" stroke="#222" stroke-width="2"/></symbol>
<symbol id="s8" viewBox="0 0 10 16"><path d="M1 1h8v15H1z" fill="#c8d8ec" stroke="#eef"/><path d="M5 5v7" stroke="#235"/></symbol>
<symbol id="s9" viewBox="0 0 16 16"><rect x="1" y="3" width="14" height="12" rx="3" fill="#e8141c"/><path d="M6 6l5 3-5 3z" fill="#fff"/></symbol>
<symbol id="s10" viewBox="0 0 16 16"><circle cx="8" cy="8.500" r="6.500" fill="#d8281c" stroke="#ddd"/></symbol>
<symbol id="s11" viewBox="0 0 16 16"><path d="M8 1l7 7h-4v7H5V8H1z" fill="#9fd03a" stroke="#58901a"/></symbol>
</svg>

<div class="app">
 <header class="head">
  <button class="appbtn" aria-label="Anwendung"><svg><use href="#logo"/></svg></button>
  <div class="headrows">
   <div class="titlebar">
    <div class="qat">
     <button class="ic" aria-label="Neu"><svg><use href="#new"/></svg></button><button class="dd" aria-label="Mehr"><svg><use href="#caret"/></svg></button><i></i>
     <button class="ic" aria-label="Öffnen"><svg><use href="#open"/></svg></button><button class="ic" aria-label="Suche"><svg><use href="#ball"/></svg></button><i></i>
     <button class="ic" aria-label="Speichern"><svg><use href="#save"/></svg></button><button class="ic" aria-label="Speichern unter"><svg><use href="#saveas"/></svg></button><button class="dd" aria-label="Mehr"><svg><use href="#caret"/></svg></button><i></i>
     <button class="ic" aria-label="Liste"><svg><use href="#list"/></svg></button><button class="ic" aria-label="Anzeige"><svg><use href="#disp"/></svg></button><button class="dd tight" aria-label="Mehr"><svg><use href="#caret"/></svg></button><i></i>
     <button class="ic" aria-label="Schließen"><svg><use href="#door"/></svg></button><i></i>
     <button class="ic" aria-label="Rückgängig"><svg><use href="#undo"/></svg></button><button class="dd" aria-label="Mehr"><svg><use href="#caret"/></svg></button>
     <button class="ic" aria-label="Wiederholen"><svg><use href="#redo"/></svg></button><button class="dd" aria-label="Mehr"><svg><use href="#caret"/></svg></button><i></i>
     <button class="ic" aria-label="Verlauf"><svg><use href="#hist"/></svg></button><button class="cust" aria-label="Anpassen"><svg><use href="#cust"/></svg></button>
    </div>
    <h1>Solid Edge 2022 - Assembly - [Lautsprecher box.asm]</h1>
    <div class="winctl"><button aria-label="Minimieren"><svg><use href="#min"/></svg></button><button aria-label="Wiederherstellen"><svg><use href="#rest"/></svg></button><button aria-label="Schließen"><svg><use href="#x"/></svg></button></div>
   </div>
   <div class="tabrow">
    <nav class="tabs"><a href="#" class="on">Home</a><a href="#">Formelemente</a><a href="#">PMI</a><a href="#">Simulation</a><a href="#">Simulationsgeometrie</a><a href="#">3D-Druck</a><a href="#">Prüfen</a><a href="#">Extras</a><a href="#">Ansicht</a><a href="#">Daten-Management</a></nav>
    <strong class="brand">SIEMENS</strong>
    <div class="aux"><svg class="s16"><use href="#smile"/></svg><svg class="s16"><use href="#sad"/></svg><button class="q" aria-label="Hilfe">?</button><button class="w" aria-label="Minimieren"><svg><use href="#min"/></svg></button><button class="w" aria-label="Wiederherstellen"><svg><use href="#rest"/></svg></button><button class="w" aria-label="Schließen"><svg><use href="#x"/></svg></button></div>
   </div>
  </div>
 </header>

 <div class="ribbon">
  <section class="grp g1"><div class="body">
   <button class="big"><svg><use href="#paste"/></svg><span>Einfügen</span></button>
   <div class="mini"><svg><use href="#cut"/></svg><svg><use href="#copy"/></svg><svg><use href="#clone"/></svg><svg class="car r3"><use href="#caret"/></svg></div>
  </div><h2>Zwischenablage</h2></section>

  <section class="grp g2"><div class="body">
   <button class="big on"><svg><use href="#cursor"/></svg><span>Auswählen</span><svg class="car"><use href="#caret"/></svg></button>
   <div class="mini"><svg><use href="#filter"/></svg><svg><use href="#boxsel"/></svg><svg><use href="#cursel"/></svg><svg><use href="#topsel"/></svg><svg><use href="#graysel"/></svg><svg><use href="#plane"/></svg><svg class="car r2"><use href="#caret"/></svg><svg class="car"><use href="#caret"/></svg><svg><use href="#find"/></svg></div>
  </div><h2>Auswahl</h2></section>

  <section class="grp g3"><div class="body">
   <button class="big"><svg><use href="#sketch"/></svg><span>Skizze</span></button>
   <button class="big"><svg><use href="#sk3d"/></svg><span>3D-Skizze</span></button>
   <div class="mini"><svg><use href="#gcopy"/></svg><svg><use href="#swap"/></svg><svg><use href="#paint"/></svg></div>
  </div><h2>Skizze</h2></section>

  <section class="grp g4"><div class="body">
   <button class="big"><svg><use href="#insert"/></svg><span>Komponente<br>einfügen <svg class="car"><use href="#caret"/></svg></span></button>
   <button class="big"><svg><use href="#inplace"/></svg><span>Teil vor Ort<br>erstellen <svg class="car"><use href="#caret"/></svg></span></button>
  </div><h2>Komponenten</h2></section>

  <section class="grp g5"><div class="body">
   <button class="big"><svg><use href="#assem"/></svg><span>Komponentenmontage</span></button><b></b>
   <div class="mini"><svg><use href="#r1"/></svg><svg><use href="#r4"/></svg><svg><use href="#r7"/></svg><svg><use href="#r2"/></svg><svg><use href="#r5"/></svg><svg><use href="#r8"/></svg><svg><use href="#r3"/></svg><svg><use href="#r6"/></svg><svg><use href="#r9"/></svg><svg class="car r3"><use href="#caret"/></svg><svg><use href="#r10"/></svg><svg><use href="#r12"/></svg><svg><use href="#r14"/></svg><svg><use href="#r11"/></svg><svg><use href="#r13"/></svg><svg><use href="#r15"/></svg></div><b></b>
   <div class="mini"><svg><use href="#c1"/></svg><svg><use href="#c2"/></svg><svg><use href="#c3"/></svg></div>
  </div><h2>Zusammenbau</h2></section>

  <section class="grp g6"><div class="body">
   <button class="big on"><svg><use href="#move"/></svg><span>Bei Auswahl<br>verschieben</span></button>
   <button class="big"><svg><use href="#drag"/></svg><span>Komponente<br>ziehen <svg class="car"><use href="#caret"/></svg></span></button>
   <button class="big rp"><svg><use href="#repl"/></svg><span>Teil<br>ersetzen <svg class="car"><use href="#caret"/></svg></span></button>
   <div class="mini"><svg><use href="#g1"/></svg><svg><use href="#g2"/></svg></div>
  </div><h2>Ändern</h2></section>

  <section class="grp g7"><div class="body">
   <div class="mini"><svg><use href="#m1"/></svg><svg><use href="#m2"/></svg><svg><use href="#m3"/></svg></div><b></b>
   <div class="mini"><svg><use href="#m4"/></svg></div>
  </div><h2>Motoren</h2></section>

  <section class="grp g8"><div class="body">
   <div class="mini"><svg><use href="#f1"/></svg><svg><use href="#f4"/></svg><svg><use href="#f7"/></svg><svg><use href="#f2"/></svg><svg><use href="#f5"/></svg><svg><use href="#f8"/></svg><svg><use href="#f3"/></svg><svg><use href="#f6"/></svg><svg><use href="#f9"/></svg></div>
  </div><h2>Teilflächenbeziehung</h2></section>

  <section class="grp g9"><div class="body">
   <div class="mini"><svg><use href="#p1"/></svg><svg><use href="#p3"/></svg><svg><use href="#p5"/></svg><svg><use href="#p2"/></svg><svg><use href="#p4"/></svg></div>
  </div><h2>Muster</h2></section>

  <section class="grp g10"><div class="body conf">
   <div class="crow"><div class="sel w1"><select aria-label="Konfiguration"><option>Standard,Solid Edge</option></select></div><svg class="s16"><use href="#k0"/></svg></div>
   <div class="crow icons"><svg class="s16"><use href="#k1"/></svg><svg class="s16"><use href="#k2"/></svg><svg class="s16"><use href="#k3"/></svg><svg class="s16"><use href="#k4"/></svg><svg class="s16"><use href="#k5"/></svg><svg class="s16"><use href="#k6"/></svg><svg class="s16"><use href="#k7"/></svg></div>
  </div><h2>Konfigurationen</h2></section>

  <section class="grp g11"><div class="body">
   <div class="mini"><svg><use href="#d1"/></svg><svg><use href="#d2"/></svg><svg><use href="#d3"/></svg></div>
  </div><h2>Modi</h2></section>

  <section class="grp g12"><div class="body">
   <button class="big"><svg><use href="#zooma"/></svg><span>Ausschnittvergrößerung</span></button>
   <button class="big"><svg><use href="#fit"/></svg><span>Einpassen</span></button>
   <div class="mini"><svg><use href="#a1"/></svg><svg><use href="#a4"/></svg><svg><use href="#a7"/></svg><svg><use href="#a2"/></svg><svg><use href="#a5"/></svg><svg><use href="#a8"/></svg><svg><use href="#a3"/></svg><svg><use href="#a6"/></svg><svg><use href="#a9"/></svg></div>
  </div><h2>Ausrichten</h2></section>

  <section class="grp g13"><div class="body">
   <div class="modes"><button aria-label="Drahtmodell"><svg><use href="#v1"/></svg></button><button aria-label="Verdeckt grau"><svg><use href="#v2"/></svg></button><button aria-label="Sichtbare Kanten"><svg><use href="#v3"/></svg></button><button aria-label="Schattiert"><svg><use href="#v4"/></svg></button><button class="on" aria-label="Schattiert mit Kanten"><svg><use href="#v5"/></svg></button></div><b></b>
   <div class="styles"><label for="fv"><span class="aa"><small>A</small><em>A</em></span>Formatvorlage</label>
    <div class="sel"><select id="fv"><option>Default</option></select></div>
    <div class="sel off"><select disabled aria-label="Zweite Vorlage"><option>(Keine)</option></select></div></div>
  </div><h2>Formatvorlage</h2></section>
 </div>

 <div class="strip">
  <svg class="grip"><use href="#gripv"/></svg>
  <button><svg><use href="#assems"/></svg>Komponentenmontage</button>
  <button><svg><use href="#save"/></svg><span><u>S</u>peichern</span></button>
  <button><svg><use href="#mat"/></svg>Materialtabelle</button>
  <button><svg><use href="#open"/></svg><span><u>Ö</u>ffnen</span></button>
  <button><svg><use href="#new"/></svg><span><u>N</u>eu</span></button>
  <button><svg><use href="#face"/></svg>Teilfläche ersetzen</button>
  <button disabled><svg><use href="#del"/></svg>Löschen</button>
  <button><svg><use href="#bau"/></svg>Baugruppe des aktiven Modells</button>
  <button disabled><svg><use href="#hide"/></svg>Ausblenden</button>
  <button><svg><use href="#all"/></svg>Alle Komponenten einblenden</button>
 </div>

 <main class="work">
  <aside class="side">
   <div class="stitle"><svg class="lib"><use href="#lib"/></svg><h2>Teilbibliothek</h2><svg class="s10"><use href="#cust"/></svg><svg class="s10"><use href="#pin"/></svg><svg class="s10"><use href="#x"/></svg></div>
   <div class="stabs"><button class="on" aria-label="Teilbibliothek"><svg><use href="#lib"/></svg></button><button aria-label="Familien"><svg><use href="#blocks"/></svg></button><button aria-label="Hilfe"><svg><use href="#help"/></svg></button><button aria-label="Monitor"><svg><use href="#gauge"/></svg></button><button aria-label="Sensoren"><svg><use href="#sens"/></svg></button><button aria-label="Simulation"><svg><use href="#heatm"/></svg></button><button class="last" aria-label="Werkzeuge"><svg><use href="#wrench"/></svg></button><svg class="ar"><use href="#tl"/></svg><svg class="ar"><use href="#trf"/></svg></div>
   <div class="stools"><button class="part" aria-label="Zurück"></button><button aria-label="Start"><svg><use href="#home"/></svg></button><button class="dis gap" aria-label="Zurück"><svg><use href="#back"/></svg></button><button class="dis" aria-label="Vor"><svg><use href="#fwd"/></svg></button><button aria-label="Aufwärts"><svg><use href="#up"/></svg></button><button class="dis" aria-label="Neuer Ordner"><svg><use href="#newf"/></svg></button><button class="wide" aria-label="Ansicht"><svg><use href="#view"/></svg><svg class="car"><use href="#caret"/></svg></button><button aria-label="Normteile"><svg><use href="#screw"/></svg></button><button aria-label="Suchen"><svg><use href="#mag"/></svg></button></div>
   <div class="folder"><svg><use href="#mon"/></svg><select aria-label="Ordner"><option>Offene Dokumente</option></select></div>
   <div class="files"></div>
   <div class="preview"><p>Vorschau ist nicht verfügbar.</p></div>
  </aside>
  <section class="doc">
   <div class="dtabs"><div class="dtab"><svg class="s16"><use href="#asm"/></svg><a href="#">Lautsprecher box.asm</a><button aria-label="Schließen"><svg><use href="#x"/></svg></button></div>
    <div class="dnav"><svg><use href="#tl"/></svg><svg><use href="#tr"/></svg><svg class="dn"><use href="#caret"/></svg><svg class="cx"><use href="#x"/></svg></div></div>
   <svg class="model" viewBox="237 199 1691 829" preserveAspectRatio="xMidYMid slice" role="img" aria-label="Lautsprecher box">
    <g stroke="#000" stroke-linejoin="round">
     <path d="M690 526L1190.500 237 1475.500 401.500 1475.500 689 974.500 977 690 814z" fill="#393939"/>
     <!-- rear chamber -->
     <path d="M815 474.500L1190.500 257.500V525L1046 607.500z" fill="#313036"/>
     <path d="M1190.500 257.500L1440 401 1208 534.500 1190.500 525z" fill="#2c2c2c"/>
     <path d="M1046 607.500l144.500-82.500 17.500 9.500L1063.500 618z" fill="#3a3a3a"/>
     <!-- front chamber -->
     <path d="M698.500 530.500L787.500 479.500V757L698.500 808.500z" fill="#313036"/>
     <path d="M787.500 479.500L1054.500 633.500 965.500 685V900L787.500 790z" fill="#2c2c2c"/>
     <path d="M698.500 808.500L787.500 757 965.500 860V962.500z" fill="#393939"/>
    </g>
    <!-- back block -->
    <g stroke="#707070" stroke-width=".8">
     <path d="M757 657L788 639 850 675 835 702z" fill="#b6b6b6"/>
     <path d="M757 657L836 702V821L757 776z" fill="#a9abaa"/>
    </g>
    <!-- stacked cells -->
    <g stroke="#5e5e5e" stroke-width=".9">
     <path d="M835.500 683q0-4 4-5l10-4L960 690h6V852L835.500 776z" fill="#939393"/>
     <path d="M835.500 683q1-3 4-1.500L965 757V852L838 779q-2.500-1.500-2.500-3z" fill="#7b7b7b"/>
     <path d="M842 679L965 748V759L838 686z" fill="#a2a2a2"/>
     <path d="M835.500 785q0-4 4-5l10-3 116 66V957L835.500 883z" fill="#939393"/>
     <path d="M835.500 790q1-3 4-1.500L965 863V958L838 886q-2.500-1.500-2.500-3z" fill="#7b7b7b"/>
     <path d="M842 785L965 854V866L838 793z" fill="#a2a2a2"/>
     <path d="M838 686V778M838 793V885M962.500 758V850M962.500 865V956M837 780L965 854M838 883L965 955" fill="none" stroke="#686868"/>
    </g>
    <!-- amplifier board -->
    <g stroke="#4c5258" stroke-width=".9">
     <path d="M790 581.500L876.500 531.500 1027.500 618 940.500 668z" fill="#a5adb4"/>
     <path d="M790 581.500L940.500 668V728L790 641.500z" fill="#8f979c"/>
     <path d="M940.500 668L1027.500 618V649L965.500 685V714L940.500 728z" fill="#8e94a5"/>
     <path d="M727 603.500L756.500 585.500 769.500 593 739.500 610z" fill="#a5adb4"/>
     <path d="M727 603.500L739.500 610V672.500L727 666z" fill="#8f979c"/>
     <path d="M739.500 610L769.500 593V655.500L739.500 672.500z" fill="#8e94a5"/>
    </g>
    <!-- terminal -->
    <g stroke="#505050" stroke-width=".9">
     <path d="M728 732L743.500 723 805.500 758.500 789.500 767.500z" fill="#b6b6b6"/>
     <path d="M728 732L789.500 767.500V827L728 793z" fill="#a9abaa"/>
     <path d="M789.500 767.500L805.500 758.500V818L789.500 827z" fill="#b3b1c0"/>
     <path d="M744.500 684v51q0 4 6.500 4t6.500-4V684z" fill="url(#cyl)"/><ellipse cx="751" cy="684" rx="6.500" ry="3" fill="#b8b8b8"/>
     <path d="M775.500 702v51q0 4 6.500 4t6.500-4V702z" fill="url(#cyl)"/><ellipse cx="782" cy="702" rx="6.500" ry="3" fill="#b8b8b8"/>
    </g>
    <!-- cabinet front frame -->
    <g stroke="#000" stroke-linejoin="round">
     <path d="M690 526L698.500 530.500V808.500L965.500 962.500V685L974.500 690V977L690 814z" fill="#2b2b2b"/>
     <path d="M974.500 690L1475.500 401.500V689L974.500 977z" fill="#313036"/>
     <path d="M965.500 685L1054.500 633.500" fill="none"/>
    </g>
    <!-- axis triad -->
    <g stroke-width="2.500" fill="none"><path d="M1082.500 751V725" stroke="#0000c8"/><path d="M1082.500 751L1104 739" stroke="#00e000"/><path d="M1082.500 751L1104 763" stroke="red"/></g>
    <path d="M1082.500 712l4 15h-8z" fill="#0000d0"/><path d="M1116 732l-10 9-4-6z" fill="#00e000"/><path d="M1116 770l-14-4 4-6z" fill="red"/><circle cx="1082.500" cy="751" r="5.500" fill="#ffe800"/><path d="M1080 749h1M1084 749v2M1083 754h3" stroke="#332"/>
    <g class="axis"><text x="1077" y="709" fill="#00f">Z</text><text x="1118" y="732" fill="#0f0">Y</text><text x="1118" y="779" fill="red">X</text></g>
    <!-- view cube -->
    <g stroke="#b4b4b4" stroke-width="1.200" stroke-linejoin="round">
     <path d="M1864 925.500L1900.500 943.500 1864 964 1827.500 943.500z" fill="#fff"/>
     <path d="M1827.500 943.500L1864 964V1006L1830.500 983z" fill="#fdfdfd"/>
     <path d="M1900.500 943.500L1864 964V1006L1897.500 983z" fill="#eceded"/>
    </g>
    <g class="cube"><text transform="matrix(.87 .5 -.87 .5 1854 940)">OBEN</text><text transform="matrix(.87 .55 0 1 1832 972)">VORNE</text><text transform="matrix(.87 -.55 0 1 1866 989)">RECHTS</text></g>
    <path d="M1864 964V945" stroke="#a8a8ff" stroke-width="1.500"/><path d="M1864 964L1879 956" stroke="#80c890"/><path d="M1864 964L1880 973" stroke="#f08080"/><path d="M1861.500 961.500h5v5h-5z" fill="#b8a030"/>
   </svg>
  </section>
 </main>

 <footer class="status">
  <p>Wählen Sie die zu bearbeitenden Komponenten aus, oder klicken Sie auf den Befehl "Komponente einfügen", den Befehl "Teil vor Ort erstellen", die Registerkarte "Teilbibliothek", oder ziehen Sie die k</p>
  <input type="text" placeholder="Einen Befehl suchen" aria-label="Einen Befehl suchen">
  <div class="stic"><svg><use href="#s1"/></svg><svg><use href="#zooma"/></svg><svg><use href="#s2"/></svg><svg><use href="#fit"/></svg><svg><use href="#a4"/></svg><svg><use href="#a7"/></svg><svg><use href="#s3"/></svg><svg><use href="#s4"/></svg><svg><use href="#s5"/></svg><svg><use href="#a9"/></svg><svg><use href="#s6"/></svg></div>
  <svg class="slide"><use href="#s8"/></svg>
  <div class="stic"><svg><use href="#s7"/></svg><svg><use href="#s9"/></svg><svg><use href="#s10"/></svg><svg><use href="#s11"/></svg></div>
 </footer>
</div>
</body>
</html>
```
FILE: styles.css
```css
* { box-sizing: border-box; }
html, body { margin: 0; height: 100%; overflow: hidden; background: #000; }
body { font: 12px/14px "Roboto Condensed", "Liberation Sans", sans-serif; color: #3c3c3c; }
svg { display: block; flex: none; }
h1, h2, p { margin: 0; font-weight: normal; }
button { border: 0; padding: 0; margin: 0; background: none; font: inherit; color: inherit; flex: none; }
a { color: inherit; text-decoration: none; }
.defs { position: absolute; width: 0; height: 0; }
.s16 { width: 16px; height: 16px; }
.s10 { width: 10px; height: 10px; }
.car { width: 6px; height: 4px; }

.app { display: flex; flex-direction: column; width: 100%; height: calc(100% + 2px); margin: 8px 0 0 8px; background: #fff; }

/* title and tabs */
.head { display: flex; flex: none; height: 50px; border-bottom: 1px solid #d4d4d4; }
.appbtn { position: relative; z-index: 1; width: 38px; height: 38px; margin: 3px 0 0 3px; border: 1px solid #2b579a; border-radius: 4px; background: #fff; }
.appbtn svg { width: 36px; height: 36px; }
.headrows { flex: 1; min-width: 0; margin-left: -41px; }
.titlebar { display: grid; grid-template-columns: 1fr auto 1fr; height: 26px; align-items: center; }
.qat { display: flex; align-items: center; height: 22px; margin-top: -2px; padding-left: 72px; gap: 5px; }
.qat svg { width: 100%; height: 100%; }
.qat .ic { width: 16px; height: 16px; }
.qat .dd { width: 6px; height: 4px; }
.qat .tight { margin-left: -5px; }
.qat .cust { width: 10px; height: 10px; margin-left: 10px; }
.qat i { width: 1px; height: 22px; background: #d9d9d9; }
h1 { font: 11px/15px "Open Sans", sans-serif; margin-top: 2px; }
.winctl { display: flex; justify-content: flex-end; gap: 19px; padding-right: 9px; color: #666; }
.winctl svg { width: 10px; height: 10px; }
.tabrow { display: flex; height: 24px; align-items: flex-end; }
.tabs { display: flex; flex: 1; padding-left: 71px; }
.tabs a { height: 24px; padding: 6px 14px 0; }
.tabs .on { padding: 5px 14px 0 12px; border: 1px solid #d4d4d4; border-bottom: 0; background: #fff; color: #2b579a; }
.brand { font: bold 16px/20px "Noto Sans", sans-serif; color: #009999; width: 130px; align-self: center; }
.aux { display: flex; align-items: center; gap: 5px; width: 109px; align-self: center; }
.aux .q { width: 14px; height: 16px; background: #1e5aa8; color: #fff; font: bold 14px/16px "Liberation Sans", sans-serif; }
.aux .w { width: 9px; margin-left: 2px; }
.aux .w svg { width: 8px; height: 8px; }

/* ribbon */
.ribbon { display: flex; flex: none; height: 87px; padding: 4px 0 6px; border-bottom: 1px solid #c8c8c8; overflow: hidden; }
.grp { flex: none; display: flex; flex-direction: column; border-right: 1px solid #dcdcdc; }
.grp .body { display: flex; flex: none; height: 63px; align-items: flex-start; }
.grp h2 { font: 11px/13px Roboto, sans-serif; color: #767676; text-align: center; white-space: nowrap; }
.body b { width: 1px; height: 63px; background: #dcdcdc; margin: 0 5px; flex: none; }
.mini { display: grid; grid-auto-flow: column; grid-template-rows: repeat(3, 16px); gap: 5px; padding-top: 2px; align-items: center; }
.mini svg { width: 16px; height: 16px; }
.mini .car { width: 6px; height: 4px; }
.mini .r2 { grid-row: 2; }
.mini .r3 { grid-row: 3; }
.big { display: flex; flex-direction: column; align-items: center; height: 63px; padding-top: 2px; line-height: 11px; text-align: center; white-space: nowrap; }
.big > svg { width: 32px; height: 32px; }
.big span { margin-top: 5px; }
.big .car { display: inline-block; width: 6px; height: 4px; vertical-align: 3px; }
.big > .car { margin-top: 8px; }
.big.on { background: #c2d5f2; }
.g1 { width: 92px; } .g1 .body { padding-left: 8px; gap: 4px; } .g1 .big { width: 45px; }
.g2 { width: 142px; } .g2 .body { padding-left: 6px; gap: 2px; } .g2 .big { width: 57px; }
.g3 { width: 127px; } .g3 .body { padding-left: 8px; gap: 3px; } .g3 .big { width: 36px; } .g3 .big + .big { width: 52px; }
.g4 { width: 133px; } .g4 .body { padding-left: 7px; gap: 2px; } .g4 .big { width: 62px; } .g4 .big + .big { width: 54px; }
.g5 { width: 272px; } .g5 .body { padding-left: 7px; } .g5 .big { width: 108px; }
.g6 { width: 215px; } .g6 .body { padding-left: 6px; gap: 2px; } .g6 .big { width: 62px; } .g6 .rp { width: 56px; }
.g7 { width: 59px; } .g7 .body { padding-left: 8px; }
.g8 { width: 108px; } .g8 .body { padding-left: 9px; }
.g9 { width: 53px; } .g9 .body { padding-left: 8px; }
.g10 { width: 162px; } .g10 .body { padding-left: 6px; }
.g11 { width: 32px; } .g11 .body { padding-left: 7px; }
.g12 { width: 245px; } .g12 .body { padding-left: 7px; gap: 5px; } .g12 .big { width: 114px; } .g12 .big + .big { width: 48px; }
.g13 { width: 253px; } .g13 .body { padding-left: 7px; }
.grp .conf { flex-direction: column; padding-top: 7px; gap: 9px; }
.crow { display: flex; align-items: center; gap: 3px; }
.crow.icons { gap: 5px; padding-left: 2px; }
.sel { position: relative; width: 100%; }
.sel.w1 { width: 130px; }
.sel select { display: block; width: 100%; height: 21px; appearance: none; border: 1px solid #ababab; border-radius: 0; background: #fff; color: #000; padding: 0 3px; font: 12px/14px "Noto Sans", sans-serif; opacity: 1; }
.sel.w1 select { font: 12px/14px Roboto, sans-serif; }
.sel::after { content: ""; position: absolute; right: 5px; top: 9px; border: 3px solid transparent; border-top: 4px solid #777; border-bottom: 0; }
.sel.off select { border-color: #dcdcdc; color: #8c8c8c; }
.sel.off::after { border-top-color: #bbb; }
.modes { display: grid; grid-template-columns: repeat(3, 31px); grid-auto-rows: 31px; }
.modes button { display: flex; align-items: center; justify-content: center; }
.modes svg { width: 22px; height: 22px; }
.modes .on { border: 4px solid #c2d5f2; }
.modes + b { margin: 0 3px 0 4px; }
.styles { width: 140px; }
.styles label { display: flex; height: 19px; align-items: center; gap: 4px; padding-left: 4px; }
.aa { display: flex; color: #000060; border-bottom: 1px solid #000060; }
.aa small { font: 8px/8px "Liberation Sans", sans-serif; }
.aa em { font: italic bold 13px/12px "Liberation Serif", serif; }

/* command strip */
.strip { display: flex; flex: none; align-items: center; align-self: flex-start; height: 23px; margin-left: 679px; padding: 0 6px 0 2px; border: 1px solid #dcdcdc; border-top: 0; gap: 7px; }
.strip button { display: flex; align-items: center; gap: 2px; white-space: nowrap; }
.strip button svg { width: 16px; height: 16px; }
.strip button:disabled { color: #a8a8a8; }
.strip .grip { width: 6px; height: 16px; margin-right: -4px; }

/* work area */
.work { display: flex; flex: 1; min-height: 0; }
.side { display: flex; flex-direction: column; width: 228px; flex: none; border-right: 2px solid #d0d0d0; background: #fff; }
.stitle { display: flex; align-items: center; height: 17px; padding: 0 9px 0 5px; color: #444; flex: none; }
.stitle .lib { width: 20px; height: 16px; }
.stitle h2 { flex: 1; padding-left: 3px; font: 11px/17px "Open Sans", sans-serif; color: #2b579a; }
.stitle .s10 { margin-left: 7px; }
.stabs { display: flex; height: 28px; width: 225px; flex: none; background: #f5f5f5; border-bottom: 1px solid #c4c4c4; align-items: center; }
.stabs button { width: 29px; height: 20px; display: flex; align-items: center; justify-content: center; border-right: 1px solid #c8c8c8; }
.stabs button svg { width: 20px; height: 16px; }
.stabs .on { width: 29px; height: 28px; border-top: 2px solid #2b579a; background: #fff; }
.stabs .last { border: 0; width: 24px; }
.stabs .ar { width: 5px; height: 9px; margin-left: 2px; margin-right: 7px; color: #2b579a; }
.stools { display: flex; gap: 2px; height: 32px; padding: 5px 0; flex: none; }
.stools button { width: 21px; height: 21px; border: 1px solid #adadad; background: #e8e8e8; display: flex; align-items: center; justify-content: center; gap: 2px; }
.stools button svg { width: 16px; height: 16px; }
.stools button .car { width: 6px; height: 4px; }
.stools .part { width: 5px; border-left: 0; }
.stools .gap { margin-left: 22px; }
.stools .dis { background: #cfcfcf; border-color: #c0c0c0; }
.stools .wide { width: 31px; }
.folder { position: relative; display: flex; align-items: center; width: 225px; height: 22px; flex: none; border: 1px solid #adadad; background: #e1e1e1; padding-left: 2px; }
.folder::after { content: ""; position: absolute; right: 7px; top: 6px; width: 6px; height: 6px; border: solid #444; border-width: 0 1px 1px 0; transform: rotate(45deg); }
.folder svg { width: 17px; height: 16px; }
.folder select { flex: 1; height: 20px; appearance: none; border: 0; background: none; font: inherit; color: #000; padding: 0 3px; }
.files { flex: 1; width: 224px; margin-top: 3px; border: 1px solid #828790; background: #fff; }
.preview { display: flex; align-items: center; justify-content: center; width: 223px; height: 198px; flex: none; border: 2px solid #a0a0a0; border-top-color: #696969; background: #efefef; color: #000; margin: 1px 0 2px 1px; box-shadow: inset 0 0 0 1px #fff; }
.preview p { font: bold 13px/16px "Liberation Sans", sans-serif; }
.doc { flex: 1; min-width: 0; display: flex; flex-direction: column; background: #fafcfb; }
.dtabs { display: flex; justify-content: space-between; height: 31px; flex: none; border-bottom: 1px solid #2b579a; background: #fff; padding: 2px 0 0 3px; }
.dtab { display: flex; align-items: center; width: 183px; gap: 3px; padding: 0 4px 2px 16px; border: 1px solid #ababab; border-top: 2px solid #2b579a; border-bottom: 0; font: 12px/16px Roboto, sans-serif; color: #2b579a; }
.dtab a { flex: 1; white-space: nowrap; }
.dtab button svg { width: 9px; height: 9px; }
.dnav { display: flex; align-items: center; gap: 9px; padding: 0 4px 6px 0; color: #777; }
.dnav svg { width: 5px; height: 9px; }
.dnav .dn { width: 7px; height: 4px; }
.dnav .cx { width: 9px; height: 9px; margin-left: -2px; }
.model { flex: 1; width: 100%; min-height: 0; background: #fafcfb; }
.axis { font: 13px "Liberation Sans", sans-serif; }
.cube { font: 9px "Liberation Sans", sans-serif; fill: #555; }

/* status bar */
.status { display: flex; flex: none; height: 22px; background: #2b579a; color: #e8eef8; padding: 2px 0 0; }
.status p { flex: 1; padding-left: 3px; font: 12px/18px Roboto, sans-serif; white-space: nowrap; overflow: hidden; }
.status input { width: 140px; height: 20px; border: 0; border-radius: 0; padding: 0 3px; font: 12px/16px Roboto, sans-serif; }
.status input::placeholder { color: #a8a8a8; opacity: 1; }
.stic { display: flex; gap: 6px; padding-left: 4px; }
.stic svg { width: 16px; height: 16px; }
.slide { width: 10px; height: 16px; margin: 0 60px 0 47px; }
```
